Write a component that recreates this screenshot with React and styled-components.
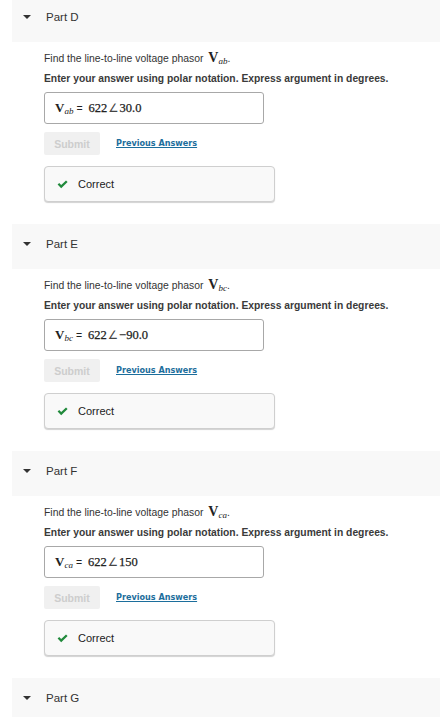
import React from "react";
import styled, { createGlobalStyle } from "styled-components";

const Global = createGlobalStyle`
  html, body { margin: 0; padding: 0; background: #fff; }
  body { font-family: "Liberation Sans", Arial, sans-serif; color: #333; }
`;

const Page = styled.div`
  margin-top: -3px;
  display: flex;
  flex-direction: column;
`;

const Section = styled.section`
  display: flex;
  flex-direction: column;
`;

const Header = styled.div`
  margin-left: 12px;
  height: 45px;
  box-sizing: border-box;
  background: #f8f8f8;
  display: flex;
  align-items: center;
  padding: 0 0 6px 11px;
  gap: 15px;
  font-size: 11.5px;
  color: #333;
`;

const Caret = styled.span`
  width: 0;
  height: 0;
  border-left: 4px solid transparent;
  border-right: 4px solid transparent;
  border-top: 4.5px solid #333;
  margin-top: 1px;
`;

const Body = styled.div`
  padding: 9px 0 22px 44px;
  display: flex;
  flex-direction: column;
  align-items: flex-start;
`;

const Prompt = styled.div`
  height: 14px;
  font-size: 10.4px;
  line-height: 14px;
  color: #333;
  display: flex;
  align-items: baseline;
  white-space: nowrap;
`;

const Instruction = styled.div`
  margin-top: 7px;
  height: 14px;
  font-size: 10.3px;
  line-height: 14px;
  font-weight: bold;
  color: #3a3a3a;
  white-space: nowrap;
`;

const MathV = styled.span`
  font-family: "Liberation Serif", "Times New Roman", serif;
  font-weight: bold;
  font-size: ${(p) => p.$size || 14}px;
  line-height: 14px;
  color: #222;
  margin-left: 2px;
`;

const Sub = styled.span`
  font-family: "Liberation Serif", "Times New Roman", serif;
  font-style: italic;
  font-size: 9px;
  line-height: 0;
  position: relative;
  top: 2px;
  color: #222;
`;

const AnswerBox = styled.div`
  margin-top: 6px;
  width: 220px;
  height: 32px;
  box-sizing: border-box;
  border: 1px solid #a8a8a8;
  border-radius: 3px;
  display: flex;
  align-items: baseline;
  padding: 8px 0 0 8px;
  color: #222;
`;

const Eq = styled.span`
  font-family: "Liberation Sans", Arial, sans-serif;
  font-size: 10.5px;
  margin: 0 6px 0 3px;
`;

const Value = styled.span`
  font-family: "Liberation Serif", "Times New Roman", serif;
  font-size: 12.5px;
  color: #222;
  -webkit-text-stroke: 0.25px #222;
`;

const Angle = styled.span`
  font-family: "DejaVu Sans", sans-serif;
  font-size: 11.5px;
  font-weight: normal;
  color: #444;
  -webkit-text-stroke: 0;
  margin: 0 1px;
`;

const Actions = styled.div`
  margin-top: 8px;
  height: 23px;
  display: flex;
  align-items: center;
  gap: 16px;
`;

const SubmitButton = styled.button`
  width: 56px;
  height: 23px;
  border: none;
  border-radius: 2px;
  background: #f0f0f0;
  color: #cdcdcd;
  font-family: "Liberation Sans", Arial, sans-serif;
  font-weight: bold;
  font-size: 10.5px;
  padding: 0;
`;

const PrevLink = styled.a`
  font-family: "DejaVu Sans Condensed", "DejaVu Sans", sans-serif;
  font-weight: bold;
  font-size: 9px;
  color: #1c6e9c;
  text-decoration: underline;
  margin-bottom: 2px;
  cursor: pointer;
`;

const Feedback = styled.div`
  margin-top: 11px;
  width: 231px;
  height: 36px;
  box-sizing: border-box;
  border: 1px solid #cfcfcf;
  border-radius: 4px;
  background: #f9f9f9;
  box-shadow: 0 1px 1px rgba(0, 0, 0, 0.18);
  display: flex;
  align-items: center;
  padding-left: 12px;
  gap: 10px;
  font-size: 11px;
  color: #222;
`;

const Check = () => (
  <svg width="11" height="9" viewBox="0 0 11 9">
    <path d="M0.6 4.6 L2.2 3.1 L4.2 5.0 L9.0 0.4 L10.6 1.9 L4.2 8.2 Z" fill="#218a3c" />
  </svg>
);

const parts = [
  { label: "Part D", sub: "ab", mag: "622", arg: "30.0" },
  { label: "Part E", sub: "bc", mag: "622", arg: "−90.0" },
  { label: "Part F", sub: "ca", mag: "622", arg: "150" },
];

function Part({ label, sub, mag, arg }) {
  return (
    <Section>
      <Header>
        <Caret />
        <span>{label}</span>
      </Header>
      <Body>
        <Prompt>
          Find the line-to-line voltage phasor&nbsp;
          <MathV>V</MathV>
          <Sub>{sub}</Sub>.
        </Prompt>
        <Instruction>
          Enter your answer using polar notation. Express argument in degrees.
        </Instruction>
        <AnswerBox>
          <MathV $size={13}>V</MathV>
          <Sub>{sub}</Sub>
          <Eq>=</Eq>
          <Value>
            {mag}
            <Angle>∠</Angle>
            {arg}
          </Value>
        </AnswerBox>
        <Actions>
          <SubmitButton disabled>Submit</SubmitButton>
          <PrevLink>Previous Answers</PrevLink>
        </Actions>
        <Feedback>
          <Check />
          <span>Correct</span>
        </Feedback>
      </Body>
    </Section>
  );
}

export default function App() {
  return (
    <>
      <Global />
      <Page>
        {parts.map((p) => (
          <Part key={p.label} {...p} />
        ))}
        <Section>
          <Header>
            <Caret />
            <span>Part G</span>
          </Header>
        </Section>
      </Page>
    </>
  );
}
